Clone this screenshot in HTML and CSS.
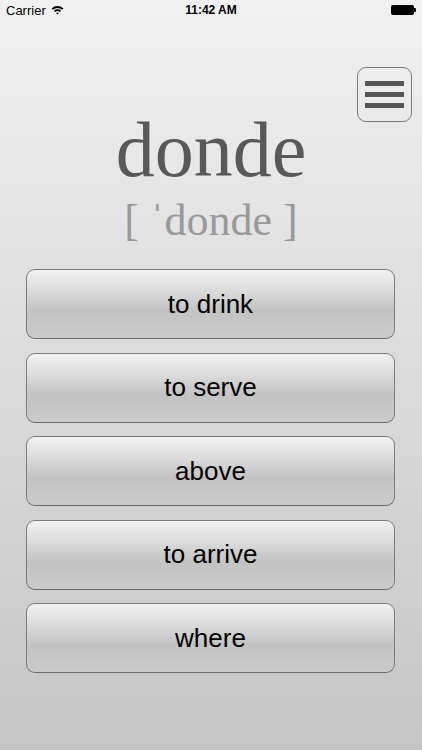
FILE: index.html
```html
<!DOCTYPE html>
<html lang="en">
<head>
  <meta charset="UTF-8" />
  <meta name="viewport" content="width=device-width, initial-scale=1.0" />
  <title>Word Quiz</title>
  <link rel="stylesheet" href="styles.css">
</head>
<body>
  <div class="status-bar">
    <div class="status-left">
      <span class="carrier">Carrier</span>
      <svg class="wifi" width="13" height="10" viewBox="0 0 13 10">
        <path d="M0.6 3.4 A8.5 8.5 0 0 1 12.4 3.4 L11.1 4.8 A6.6 6.6 0 0 0 1.9 4.8 Z" fill="#000"/>
        <path d="M2.9 5.7 A5.2 5.2 0 0 1 10.1 5.7 L8.8 7.1 A3.3 3.3 0 0 0 4.2 7.1 Z" fill="#000"/>
        <path d="M5.2 8.1 A1.9 1.9 0 0 1 7.8 8.1 L6.5 9.6 Z" fill="#000"/>
      </svg>
    </div>
    <div class="status-time">11:42 AM</div>
    <div class="status-right">
      <span class="battery"></span><span class="battery-nub"></span>
    </div>
  </div>

  <main class="screen" role="main">
    <button class="menu-btn" aria-label="Menu">
      <span></span><span></span><span></span>
    </button>

    <h1 class="word">donde</h1>
    <div class="phonetic">[ ˈdonde ]</div>

    <div class="answers">
      <button class="answer">to drink</button>
      <button class="answer">to serve</button>
      <button class="answer">above</button>
      <button class="answer">to arrive</button>
      <button class="answer">where</button>
    </div>
  </main>
</body>
</html>
```

FILE: styles.css
```css
* {
  box-sizing: border-box;
}
body {
  margin: 0;
  width: 422px;
  height: 750px;
  overflow: hidden;
  background: linear-gradient(#f1f1f1, #c5c5c5);
  font-family: "Liberation Sans", Arial, sans-serif;
  color: #000;
}
.status-bar {
  height: 20px;
  display: flex;
  align-items: center;
  justify-content: space-between;
  padding: 0 6px;
  position: relative;
}
.status-left {
  display: flex;
  align-items: center;
  gap: 5px;
  font-size: 13px;
}
.wifi {
  margin-top: -1px;
}
.status-time {
  position: absolute;
  left: 0;
  right: 0;
  text-align: center;
  font-size: 12px;
  font-weight: bold;
  pointer-events: none;
}
.status-right {
  display: flex;
  align-items: center;
}
.battery {
  display: block;
  width: 23px;
  height: 10px;
  background: #000;
  border-radius: 2px;
}
.battery-nub {
  display: block;
  width: 2px;
  height: 4px;
  background: #000;
  border-radius: 0 1px 1px 0;
}
.screen {
  position: relative;
  padding-top: 91px;
}
.menu-btn {
  position: absolute;
  top: 47px;
  right: 10px;
  width: 55px;
  height: 55px;
  border: 1.5px solid #7a7a7a;
  border-radius: 9px;
  background: transparent;
  display: flex;
  flex-direction: column;
  align-items: center;
  justify-content: center;
  gap: 6px;
  padding: 0;
  cursor: pointer;
}
.menu-btn span {
  display: block;
  width: 39px;
  height: 5px;
  background: #555;
}
.word {
  margin: 0;
  text-align: center;
  font-family: "Liberation Serif", "Times New Roman", serif;
  font-weight: normal;
  font-size: 78px;
  line-height: 78px;
  color: #595959;
}
.phonetic {
  margin-top: 10px;
  text-align: center;
  font-family: "Liberation Serif", "Times New Roman", serif;
  font-size: 44px;
  line-height: 44px;
  color: #999;
}
.answers {
  margin-top: 26px;
  padding: 0 27px 0 26px;
  display: flex;
  flex-direction: column;
  gap: 13.5px;
}
.answer {
  height: 70px;
  width: 100%;
  border: 1px solid #7c7c7c;
  border-bottom-color: #6a6a6a;
  border-radius: 9px;
  background: linear-gradient(#f2f2f2 0%, #dcdcdc 30%, #c3c3c3 60%, #cbcbcb 100%);
  font-family: "Liberation Sans", Arial, sans-serif;
  font-size: 26px;
  color: #000;
  cursor: pointer;
  padding: 0;
}
.answer:active {
  background: #bdbdbd;
}
```
